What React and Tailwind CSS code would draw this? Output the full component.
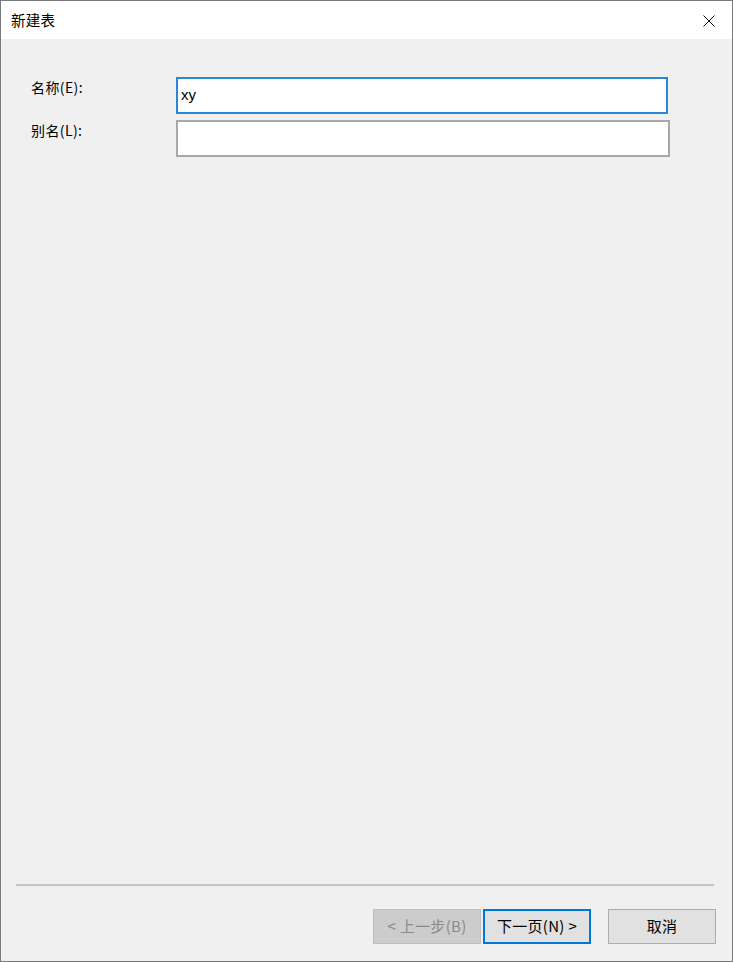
import React from 'react';

const font = "font-['Microsoft_YaHei_UI','Noto_Sans_CJK_SC',sans-serif]";

export default function App() {
  return (
    <div className={`w-[733px] h-[962px] flex flex-col bg-[#f0f0f0] border border-[#7a7a7a] text-black ${font}`}>
      {/* 标题栏 */}
      <div className="h-[38px] bg-white flex items-center justify-between shrink-0">
        <span className="pl-[10px] text-[14.5px] leading-none tracking-[0.3px]">新建表</span>
        <button className="w-[46px] h-[38px] flex items-center justify-center mr-[-1px]">
          <svg width="12" height="12" viewBox="0 0 12 12" className="mr-[2px] mt-[2px]">
            <path d="M0.5 0.5 L11.5 11.5 M11.5 0.5 L0.5 11.5" stroke="#111" strokeWidth="1" fill="none" />
          </svg>
        </button>
      </div>

      {/* 表单 */}
      <div className="flex-1 pt-[38px] pl-[30px]">
        <div className="grid grid-cols-[145px_auto] gap-y-[6px] items-start">
          <label className="text-[14px] leading-[37px] -mt-[8px] tracking-[0.4px]">名称(E):</label>
          <div className="w-[492px] h-[37px] bg-white border-2 border-[#2b86d6] flex items-center px-[3px]">
            <span className="text-[15px] leading-none font-['Liberation_Sans',sans-serif] -mt-[2px]">xy</span>
          </div>
          <label className="text-[14px] leading-[37px] -mt-[8px] tracking-[0.4px]">别名(L):</label>
          <div className="w-[494px] h-[37px] bg-white border-2 border-[#a8a8a8]" />
        </div>
      </div>

      {/* 底部 */}
      <div className="shrink-0 pb-[17px]">
        <div className="ml-[15px] mr-[18px] h-[2px] bg-[#c4c4c4]" />
        <div className="flex justify-end pr-[16px] mt-[23px] text-[15px] tracking-[0.3px]">
          <button className="w-[108px] h-[35px] bg-[#cccccc] border border-[#bfbfbf] text-[#8a8a8a]">
            &lt; 上一步(B)
          </button>
          <button className="ml-[2px] w-[108px] h-[35px] bg-[#e1e1e1] border-2 border-[#0078d7] text-black">
            下一页(N) &gt;
          </button>
          <button className="ml-[17px] w-[108px] h-[35px] bg-[#e1e1e1] border border-[#adadad] text-black">
            取消
          </button>
        </div>
      </div>
    </div>
  );
}
